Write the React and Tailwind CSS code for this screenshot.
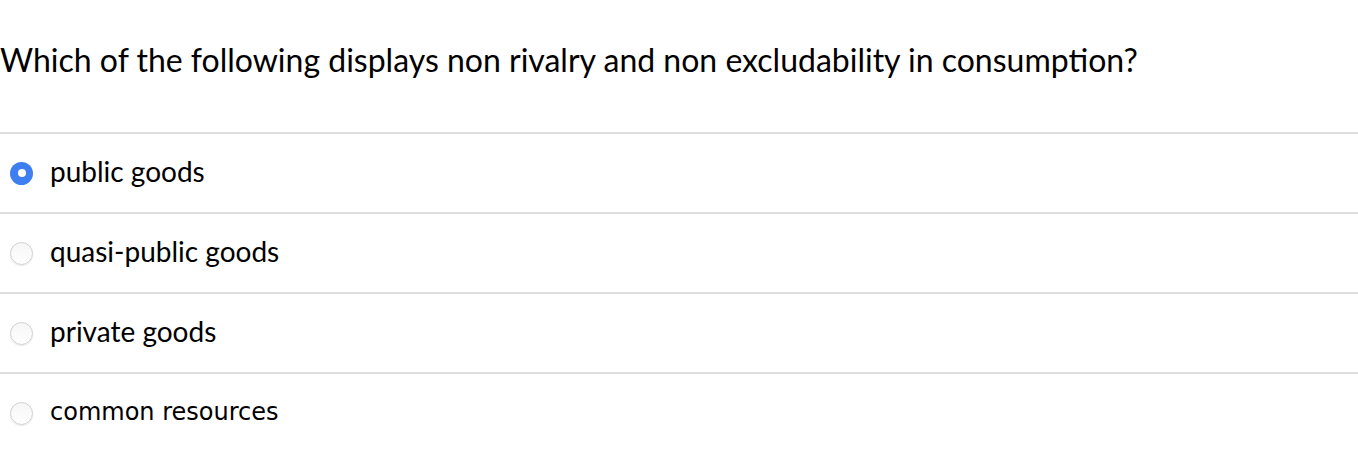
import React, { useState } from "react";

const options = [
  { id: "public", label: "public goods" },
  { id: "quasi", label: "quasi-public goods" },
  { id: "private", label: "private goods" },
  { id: "common", label: "common resources", alt: true },
];

const Radio = ({ checked }) => {
  if (checked) {
    return (
      <span className="flex h-[23px] w-[23px] shrink-0 items-center justify-center rounded-full bg-[#3d7ff0]">
        <span className="h-[8px] w-[8px] rounded-full bg-white" />
      </span>
    );
  }
  return (
    <span className="block h-[23px] w-[23px] shrink-0 rounded-full border border-[#cfcfcf] bg-gradient-to-b from-[#f6f6f6] to-white shadow-[0_1px_1px_rgba(0,0,0,0.08)]" />
  );
};

export default function App() {
  const [selected, setSelected] = useState("public");

  return (
    <div className="h-[464px] w-full bg-white font-['Lato',sans-serif] text-black">
      {/* Question */}
      <div className="pt-[42px] pb-[54px]">
        <h1 className="text-[32px] leading-[36px] font-normal">
          Which of the following displays non rivalry and non excludability in consumption?
        </h1>
      </div>

      {/* Answers */}
      <div>
        {options.map((opt) => (
          <label
            key={opt.id}
            onClick={() => setSelected(opt.id)}
            className="flex h-[80px] cursor-pointer items-center border-t-2 border-[#dddddd] pl-[10px]"
          >
            <Radio checked={selected === opt.id} />
            <span
              className={
                opt.alt
                  ? "ml-[17px] -mt-[3px] font-['DejaVu_Sans',sans-serif] text-[24px] leading-none"
                  : "ml-[17px] -mt-[5px] text-[28px] leading-none"
              }
            >
              {opt.label}
            </span>
          </label>
        ))}
      </div>
    </div>
  );
}
